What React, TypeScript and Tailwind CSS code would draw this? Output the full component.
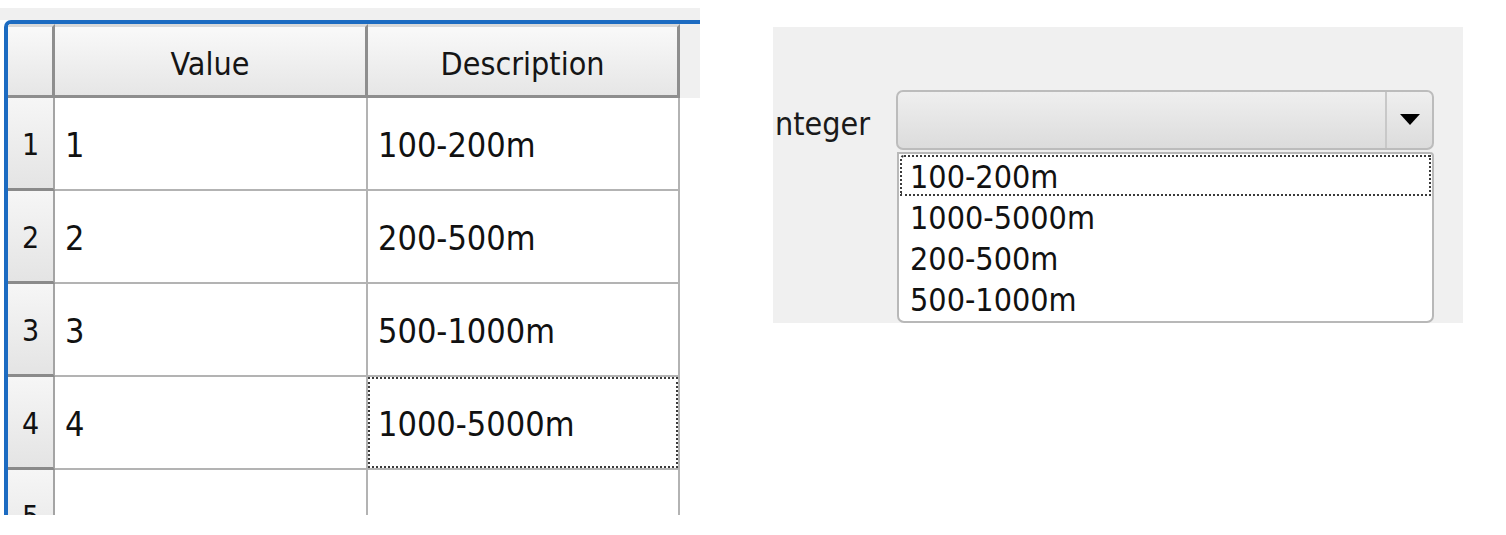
import React from "react";

const font = { fontFamily: '"DejaVu Sans Condensed", "Liberation Sans", sans-serif' };

const rows = [
  { n: "1", v: "1", d: "100-200m" },
  { n: "2", v: "2", d: "200-500m" },
  { n: "3", v: "3", d: "500-1000m" },
  { n: "4", v: "4", d: "1000-5000m", focus: true },
  { n: "5", v: "", d: "" },
];

function HeaderCell({ children, last }: { children?: React.ReactNode; last?: boolean }) {
  return (
    <div
      className={`flex items-center justify-center pt-[6px] bg-gradient-to-b from-[#f9f9f9] to-[#e6e6e6] border-b-[3px] border-b-[#8e8e8e] ${
        last ? "" : "border-r-[3px] border-r-[#8e8e8e]"
      } text-[32px] text-[#151515] border-t-[3px] border-t-[#d8d8d8]`}
    >
      {children}
    </div>
  );
}

export default function App() {
  return (
    <div className="flex w-[1506px] h-[535px] bg-white overflow-hidden text-[#111]" style={font}>
      {/* Left: table */}
      <div className="w-[700px] shrink-0 pt-[8px] flex flex-col">
        <div className="h-[12px] bg-[#f0f0f0]" />
        <div className="ml-[4px] h-[495px] border-l-[4px] border-t-[4px] border-[#1c6bc1] rounded-tl-[7px] overflow-hidden">
          <div className="grid grid-cols-[47px_313px_312px_1fr] grid-rows-[74px_93px_93px_93px_93px_93px]">
            <HeaderCell />
            <HeaderCell>Value</HeaderCell>
            <HeaderCell>Description</HeaderCell>
            <div className="bg-[#f0f0f0]" />
            {rows.map((r) => (
              <React.Fragment key={r.n}>
                <div className="flex items-center justify-center pt-[3px] bg-gradient-to-b from-[#f6f6f6] to-[#e4e4e4] border-b-[3px] border-b-[#8a8a8a] border-r-[2px] border-r-[#a4a4a4] text-[30px]">
                  {r.n}
                </div>
                <div className="flex items-center pl-[10px] pt-[3px] border-b-[2px] border-r-[2px] border-[#b3b3b3] text-[34px]">
                  {r.v}
                </div>
                <div className="border-b-[2px] border-r-[2px] border-[#b3b3b3] text-[34px]">
                  {r.focus ? (
                    <div className="h-full flex items-center pl-[8px] pt-[3px] border-[2px] border-dotted border-[#3a3a3a]">
                      {r.d}
                    </div>
                  ) : (
                    <div className="h-full flex items-center pl-[10px] pt-[3px]">{r.d}</div>
                  )}
                </div>
                <div className="bg-white" />
              </React.Fragment>
            ))}
          </div>
        </div>
      </div>

      {/* Right: combobox */}
      <div className="ml-[73px] mt-[27px] w-[690px] h-[296px] shrink-0 bg-[#f0f0f0] flex">
        <div className="w-[123px] shrink-0 pt-[63px]">
          <div className="h-[60px] flex items-center pl-[2px] pt-[8px] text-[32px] text-[#1a1a1a]">nteger</div>
        </div>
        <div className="pt-[63px] w-[538px] flex flex-col">
          <div className="h-[60px] flex rounded-[7px] border-[2px] border-[#bcbcbc] bg-gradient-to-b from-[#efefef] to-[#dcdcdc]">
            <div className="flex-1" />
            <div className="w-[47px] border-l-[2px] border-[#c8c8c8] flex items-center justify-center">
              <svg width="20" height="12" viewBox="0 0 20 12">
                <polygon points="0,0 20,0 10,11" fill="#000" />
              </svg>
            </div>
          </div>
          <div className="mt-[2px] ml-[1px] h-[171px] bg-white border-[2px] border-[#b8b8b8] rounded-b-[7px] rounded-tr-[4px] pt-[1px] px-[1px] text-[32px] leading-[40px]">
            <div className="h-[41px] flex items-center pl-[8px] pt-[2px] border-[2px] border-dotted border-[#3a3a3a] rounded-tl-[4px]">
              100-200m
            </div>
            <div className="h-[41px] flex items-center pl-[10px] pt-[2px]">1000-5000m</div>
            <div className="h-[41px] flex items-center pl-[10px] pt-[2px]">200-500m</div>
            <div className="h-[41px] flex items-center pl-[10px] pt-[2px]">500-1000m</div>
          </div>
        </div>
      </div>
    </div>
  );
}
